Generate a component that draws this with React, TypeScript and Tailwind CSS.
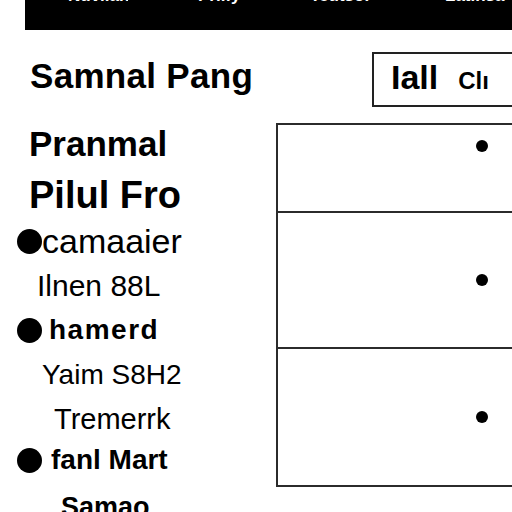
const NAV = [
  { label: 'Nuvilan', cls: 'ml-[43px] w-[60px]' },
  { label: 'Prlify', cls: 'ml-[70px] w-[59px]' },
  { label: 'Teutsor', cls: 'ml-[53px] w-[67px]' },
  { label: 'Latinsa', cls: 'ml-[68px] w-[65px]' },
];

const Dot = ({ className = '' }: { className?: string }) => (
  <span className={`block shrink-0 rounded-full bg-black ${className}`} />
);

const App = () => {
  return (
    <div className="w-[512px] h-[512px] overflow-hidden bg-white text-black font-['Liberation_Sans',Arial,sans-serif]">
      {/* Top bar, labels cut off by the top edge */}
      <div className="ml-[25px] h-[30px] bg-black overflow-hidden flex text-white text-[17px] font-bold leading-none">
        {NAV.map((item) => (
          <span key={item.label} className={`-mt-[13px] whitespace-nowrap overflow-hidden ${item.cls}`}>
            {item.label}
          </span>
        ))}
      </div>

      {/* Title row */}
      <div className="mt-[22px] flex items-start pl-[30px]">
        <h1 className="mt-[6px] text-[35px] font-bold leading-none whitespace-nowrap tracking-[0.3px]">Samnal Pang</h1>
        <div className="ml-auto -mr-[10px] w-[150px] h-[55px] shrink-0 border-2 border-[#222]">
          <div className="flex items-baseline pt-[6px] pl-[17px] leading-none">
            <span className="text-[34px] font-bold">Iall</span>
            <span className="ml-[20px] text-[24px] font-bold">Clı</span>
          </div>
        </div>
      </div>

      {/* Body */}
      <div className="mt-[16px] flex items-start">
        <div className="w-[276px] shrink-0 flex flex-col leading-none whitespace-nowrap">
          <div className="mt-[3px] pl-[29px] text-[35px] font-bold">Pranmal</div>
          <div className="mt-[15px] pl-[29px] text-[38px] font-bold">Pilul Fro</div>
          <div className="mt-[10px] flex items-center text-[34px]">
            <Dot className="ml-[17px] w-[25px] h-[25px]" />
            <span>camaaier</span>
          </div>
          <div className="mt-[13px] pl-[37px] text-[30px]">Ilnen 88L</div>
          <div className="mt-[15px] flex items-center text-[28px] font-bold tracking-[1.5px]">
            <Dot className="ml-[17px] w-[25px] h-[25px]" />
            <span className="ml-[7px]">hamerd</span>
          </div>
          <div className="mt-[17px] pl-[42px] text-[28px]">Yaim S8H2</div>
          <div className="mt-[16px] pl-[54px] text-[29px]">Tremerrk</div>
          <div className="mt-[12px] flex items-center text-[28px] font-bold">
            <Dot className="ml-[17px] w-[25px] h-[25px]" />
            <span className="ml-[9px]">fanl Mart</span>
          </div>
          <div className="mt-[20px] pl-[61px] text-[27px] font-bold">Samao</div>
        </div>

        <div className="w-[260px] shrink-0 border-2 border-[#2b2b2b] flex flex-col">
          <div className="h-[86px] pl-[198px] pt-[15px]">
            <Dot className="w-[12px] h-[12px]" />
          </div>
          <div className="h-[136px] border-t-2 border-[#2b2b2b] pl-[198px] flex items-center">
            <Dot className="w-[12px] h-[12px]" />
          </div>
          <div className="h-[138px] border-t-2 border-[#2b2b2b] pl-[198px] flex items-center">
            <Dot className="w-[12px] h-[12px]" />
          </div>
        </div>
      </div>
    </div>
  );
};

export default App;
